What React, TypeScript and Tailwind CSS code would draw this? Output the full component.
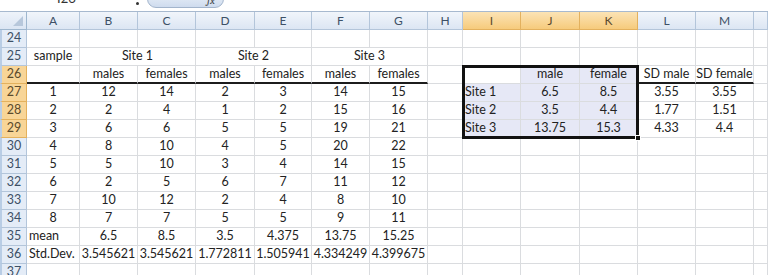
import React from "react";

type Cell = {
  t?: string;
  span?: number;
  align?: "l" | "c";
  sel?: boolean;
  under?: boolean;
};

const COLS = ["A", "B", "C", "D", "E", "F", "G", "H", "I", "J", "K", "L", "M", ""];
const HOT_COLS = ["I", "J", "K"];

const c = (t?: string, extra: Partial<Cell> = {}): Cell => ({ t, ...extra });
const blank = (n: number): Cell[] => Array.from({ length: n }, () => ({}));

// summary table cells, columns H..M
const summary: Record<number, Cell[]> = {
  26: [c(), c(), c("male", { sel: true }), c("female", { sel: true }), c("SD male", { under: true }), c("SD female", { under: true })],
  27: [c(), c("Site 1", { align: "l", sel: true }), c("6.5", { sel: true }), c("8.5", { sel: true }), c("3.55"), c("3.55")],
  28: [c(), c("Site 2", { align: "l", sel: true }), c("3.5", { sel: true }), c("4.4", { sel: true }), c("1.77"), c("1.51")],
  29: [c(), c("Site 3", { align: "l", sel: true }), c("13.75", { sel: true }), c("15.3", { sel: true }), c("4.33"), c("4.4")],
};

const data: Record<number, string[]> = {
  27: ["1", "12", "14", "2", "3", "14", "15"],
  28: ["2", "2", "4", "1", "2", "15", "16"],
  29: ["3", "6", "6", "5", "5", "19", "21"],
  30: ["4", "8", "10", "4", "5", "20", "22"],
  31: ["5", "5", "10", "3", "4", "14", "15"],
  32: ["6", "2", "5", "6", "7", "11", "12"],
  33: ["7", "10", "12", "2", "4", "8", "10"],
  34: ["8", "7", "7", "5", "5", "9", "11"],
};

function buildRow(n: number): Cell[] {
  if (n === 25)
    return [c("sample"), c("Site 1", { span: 2 }), c("Site 2", { span: 2 }), c("Site 3", { span: 2 }), ...blank(7)];
  if (n === 26)
    return [
      c("", { under: true }),
      ...["males", "females", "males", "females", "males", "females"].map((t) => c(t, { under: true })),
      ...summary[26],
      c(),
    ];
  if (n === 35)
    return [c("mean", { align: "l" }), ...["6.5", "8.5", "3.5", "4.375", "13.75", "15.25"].map((t) => c(t)), ...blank(7)];
  if (n === 36)
    return [
      c("Std.Dev.", { align: "l" }),
      ...["3.545621", "3.545621", "1.772811", "1.505941", "4.334249", "4.399675"].map((t) => c(t)),
      ...blank(7),
    ];
  if (data[n]) {
    const tail = summary[n] ?? blank(6);
    return [...data[n].map((t) => c(t)), ...tail, c()];
  }
  return blank(14);
}

const ROWS = [24, 25, 26, 27, 28, 29, 30, 31, 32, 33, 34, 35, 36, 37];

function GridCell({ cell }: { cell: Cell }) {
  const span = cell.span === 2 ? "col-span-2" : "";
  return (
    <div
      className={
        "flex items-center overflow-hidden whitespace-nowrap border-r border-[#dadcdf] " +
        (cell.under ? "border-b-2 border-b-[#1c1c1c] " : "border-b ") +
        (cell.align === "l" ? "justify-start pl-[2px] " : "justify-center ") +
        (cell.sel ? "bg-[#e6e8f6] " : "bg-white ") +
        span
      }
    >
      {cell.t}
    </div>
  );
}

export default function App() {
  return (
    <div
      className="relative h-[275px] w-[768px] overflow-hidden bg-white text-[12.5px] leading-none text-[#222]"
      style={{ fontFamily: "Lato, 'Open Sans', sans-serif" }}
    >
      {/* formula bar strip */}
      <div className="relative h-[12px] border-b border-[#a7b9cf] bg-white">
        <span className="absolute left-[57px] top-[-8px] text-[13px] text-[#333]">I26</span>
        <span className="absolute left-[136px] top-[2px] size-[3px] rounded-full bg-[#333]" />
        <div className="absolute left-[147px] top-[-10px] flex h-[18px] w-[77px] items-end justify-end rounded-b-[9px] border border-[#a3b5cc] bg-linear-to-b from-[#eef3fa] to-[#cfdcee] pr-[8px] pb-[1px]">
          <span className="font-serif text-[11px] italic text-[#444]">fx</span>
        </div>
      </div>

      <div className="grid auto-rows-[18px] grid-cols-[27px_53px_58px_58px_59px_57px_58px_58px_35px_58px_59px_58px_58px_58px_1fr]">
        {/* corner */}
        <div className="relative border-r border-b border-[#9eb6ce] bg-linear-to-b from-[#eef3fa] to-[#dbe5f3]">
          <svg className="absolute right-[3px] bottom-[3px]" width="10" height="10" viewBox="0 0 10 10">
            <path d="M10 0 L10 10 L0 10 Z" fill="#b7c7db" />
          </svg>
        </div>
        {COLS.map((col, i) => {
          const hot = HOT_COLS.includes(col);
          return (
            <div
              key={i}
              className={
                "flex items-center justify-center border-r border-b text-[12px] " +
                (hot
                  ? "border-[#e3b15e] bg-linear-to-b from-[#fbe3b5] to-[#f6cb7c] text-[#5b4a2c]"
                  : "border-[#b3c5da] bg-linear-to-b from-[#f1f5fb] to-[#dce6f3] text-[#3d5066]")
              }
            >
              {col}
            </div>
          );
        })}

        {ROWS.map((n) => (
          <React.Fragment key={n}>
            <div
              className={
                "flex items-center justify-center border-r border-b border-l-2 border-l-[#b9cde5] " +
                (n >= 26 && n <= 29
                  ? "border-[#e3b15e] bg-[#f8d597] text-[#5b4a2c]"
                  : "border-[#b3c5da] bg-[#e4ecf7] text-[#3d5066]")
              }
            >
              {n}
            </div>
            {buildRow(n).map((cell, i) => (
              <GridCell key={i} cell={cell} />
            ))}
          </React.Fragment>
        ))}
      </div>

      {/* selection outline I26:K29 */}
      <div className="pointer-events-none absolute left-[462px] top-[65px] h-[74px] w-[177px] border-[3px] border-[#111]" />
      <div className="pointer-events-none absolute left-[635px] top-[135px] size-[6px] border border-white bg-[#111]" />
    </div>
  );
}
